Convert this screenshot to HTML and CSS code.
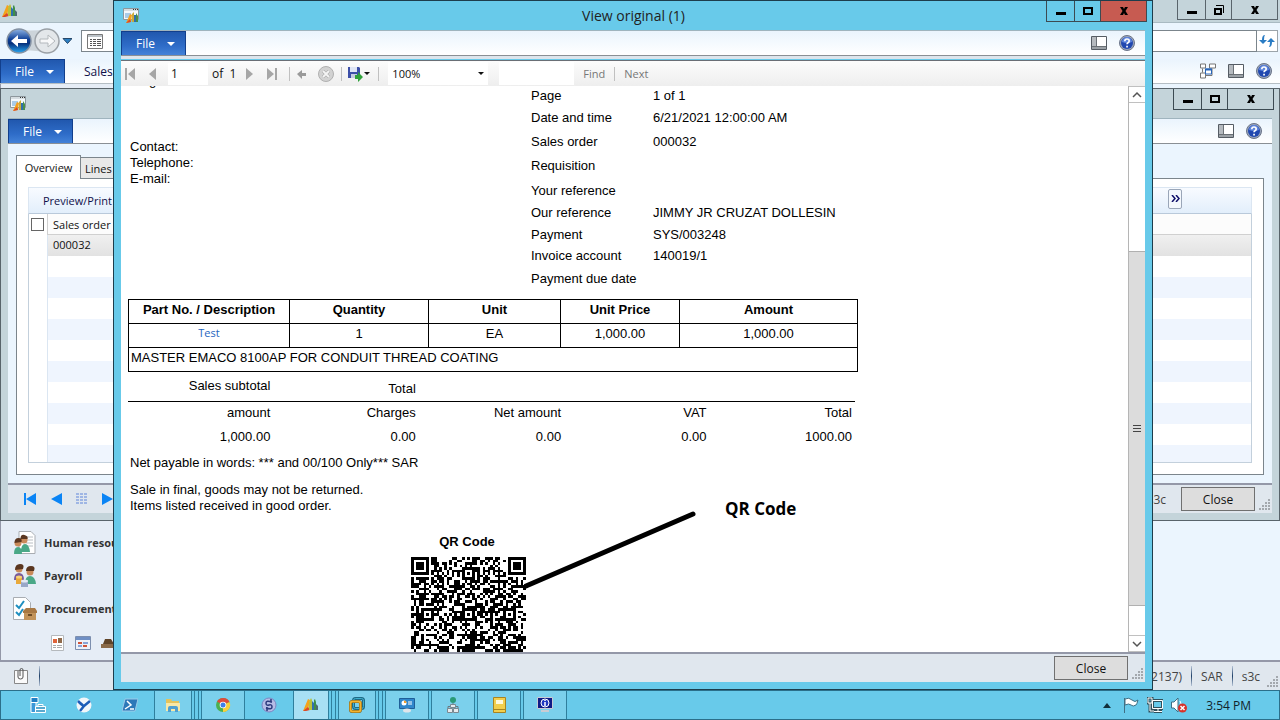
FILE: index.html
```html
<!DOCTYPE html>
<html lang="en">

<head>
    <meta charset="utf-8">
    <title>View original (1)</title>
    <link rel="stylesheet" href="styles.css">
</head>

<body>
    <svg class="symbols" aria-hidden="true">
        <symbol id="ax" viewBox="0 0 16 16">
            <path d="M0 14 5 2l2 1-2 10z" fill="#f4a31c" />
            <path d="M0 14l5-4 2 3-4 1z" fill="#d9482b" />
            <path d="M6 13V5l2-4 1 2v10z" fill="#b9c13a" />
            <path d="M9 13V4l2 2v7z" fill="#2f6fb0" />
            <path d="M11 13V3l1-1 1 3v8z" fill="#3f8f4a" />
            <path d="M13 13V7l2 2v4z" fill="#4c6b74" />
        </symbol>
        <symbol id="form" viewBox="0 0 16 16">
            <path d="M.5.5h15v11H.5z" fill="#f4f8fb" stroke="#8d979d" />
            <path d="M1 1h14v2H1z" fill="#d6dde1" />
            <path d="M10 1.5h1m1 0h1m1 0h1" stroke="#333" />
            <path d="M2 5h6v5H2z" fill="#a9cbe8" />
            <path d="M3 15 7 6l2 1-1 7z" fill="#f2a01e" />
            <path d="M3 15l4-4 1 3z" fill="#d9482b" />
            <path d="M9 14V6l2-2v10z" fill="#c9a93a" />
            <path d="M11 14V7h2v7z" fill="#2f6fb0" />
            <path d="M13 14V5l2 3v6z" fill="#4a8f4a" />
        </symbol>
        <symbol id="pane" viewBox="0 0 16 14">
            <path d="M.5.5h15v13H.5z" fill="#fff" stroke="#555c64" />
            <path d="M1 1h4v9H1z" fill="#b5babf" />
            <path d="M5.500 1v9M1 10.500h14" stroke="#6a7076" />
            <path d="M1 11h14v2H1z" fill="#9ba1a6" />
        </symbol>
        <symbol id="help" viewBox="0 0 16 16">
            <circle cx="8" cy="8" r="7.500" fill="#9aa6bd" stroke="#6b7488" />
            <circle cx="8" cy="8" r="6" fill="#2148b0" />
            <path d="M3 7a5 5 0 0 1 10 0q-5 2-10 0z" fill="#5f86dd" />
            <path d="M5.800 6.200q0-2.200 2.200-2.200t2.200 2q0 1.200-1.200 1.800-1 .6-1 1.500" fill="none" stroke="#fff" stroke-width="1.600" />
            <path d="M7.200 10.800h1.700v1.700H7.200z" fill="#fff" />
        </symbol>
        <symbol id="min" viewBox="0 0 12 10"><path d="M1 6h10v3H1z" /></symbol>
        <symbol id="max" viewBox="0 0 12 10"><path d="M2 2h8v6H2z" fill="none" stroke="#000" stroke-width="2" /></symbol>
        <symbol id="restore" viewBox="0 0 12 10"><path d="M2 4h6v5H2z" fill="none" stroke="#000" stroke-width="2" /><path d="M3 .5h7.500V8" fill="none" stroke="#000" /></symbol>
        <symbol id="close" viewBox="0 0 12 10"><path d="M2 1h3l1 2 1-2h3L7.500 5 10 9H7L6 7 5 9H2l2.500-4z" /></symbol>
        <symbol id="grip" viewBox="0 0 12 12">
            <path d="M9 1h2M6 4h5M3 7h8M0 10h11" stroke="#a3a8ad" stroke-width="2" stroke-dasharray="2 1" />
        </symbol>
    </svg>

    <main class="desktop">
        <!-- main workspace -->
        <section class="window workspace">
            <header class="titlebar">
                <svg class="icon"><use href="#ax" /></svg>
                <div class="caption-buttons">
                    <button class="cap" aria-label="Minimize"><svg><use href="#min" /></svg></button>
                    <button class="cap cap-mid" aria-label="Restore"><svg><use href="#restore" /></svg></button>
                    <button class="cap cap-close" aria-label="Close"><svg><use href="#close" /></svg></button>
                </div>
            </header>
            <div class="navbar">
                <svg class="nav-arrows" viewBox="0 0 72 28">
                    <defs>
                        <linearGradient id="orb" x2="0" y2="1">
                            <stop offset="0" stop-color="#8fb4e4" />
                            <stop offset=".45" stop-color="#0b3c94" />
                            <stop offset=".6" stop-color="#06307c" />
                            <stop offset="1" stop-color="#27a8f2" />
                        </linearGradient>
                    </defs>
                    <path d="M14 2q16 3 34 0v24q-18-5-34 0z" fill="#ccd4da" />
                    <circle cx="19" cy="14" r="12" fill="url(#orb)" stroke="#8592a3" stroke-width="1.500" />
                    <path d="M11 14l7-6v4h9v4h-9v4z" fill="#fff" />
                    <circle cx="47" cy="14" r="12" fill="#e3e7ea" stroke="#9aa0a6" stroke-width="1.500" />
                    <path d="M55 14l-7-6v4h-8v4h8v4z" fill="#f7f8f9" stroke="#b3b8bc" />
                    <path d="M63 11.500h9l-4.500 5z" fill="#2b7fc4" stroke="#27496b" />
                </svg>
                <div class="address">
                    <svg class="list-icon" viewBox="0 0 16 15">
                        <path d="M.5.5h15v14H.5z" fill="#fff" stroke="#777" />
                        <path d="M1 1h14v2H1z" fill="#bcc3c8" />
                        <path d="M3 5.500h2m1 0h3m1 0h4M3 7.500h2m1 0h3m1 0h4M3 9.500h2m1 0h3m1 0h4M3 11.500h2m1 0h3m1 0h4" stroke="#555" />
                    </svg>
                </div>
                <button class="refresh" aria-label="Refresh">
                    <svg viewBox="0 0 16 14">
                        <path d="M6 1q-3 0-3 5H0l4 4 4-4H5q0-4 1-5z" fill="#2a7cc4" />
                        <path d="M10 13q3 0 3-5h3l-4-4-4 4h3q0 4-1 5z" fill="#2a7cc4" />
                    </svg>
                </button>
            </div>
            <div class="ribbon">
                <button class="file">File<i class="caret"></i></button>
                <a class="ribbon-link" href="#">Sales</a>
                <div class="ribbon-icons">
                    <svg class="icon" viewBox="0 0 16 15">
                        <path d="M.5.500h5v4h-5zM9.500.500h6v4h-6zM.5 9.500h5v5h-5z" fill="#fff" stroke="#777" />
                        <path d="M2.500 5v4M12 5v7H6" fill="none" stroke="#777" />
                        <path d="M5.500 5.500h6v5h-6z" fill="#fff" stroke="#2a66b8" />
                        <path d="M5 5h7v2H5z" fill="#2a66b8" />
                    </svg>
                    <svg class="icon"><use href="#pane" /></svg>
                    <svg class="icon"><use href="#help" /></svg>
                </div>
            </div>
            <div class="workspace-body">
                <nav class="modules">
                    <a class="module" href="#">
                        <svg viewBox="0 0 24 24">
                            <path d="M6 .5h12l4 4v18H6z" fill="#fff" stroke="#a9adb2" />
                            <path d="M13 6h7m-7 3h7m-7 3h7m-7 3h7" stroke="#b9bec3" />
                            <path d="M1 23q0-7 4-7t4 7zM8 21q0-8 4-8t5 8z" fill="#4aa887" />
                            <circle cx="5" cy="12" r="3.500" fill="#c98a5a" /><circle cx="11" cy="9" r="3.500" fill="#c98a5a" />
                            <path d="M1.500 12q0-5 4-5t3 4zM7.500 8q0-5 4-4t3 4z" fill="#5a3620" />
                        </svg>
                        Human resources
                    </a>
                    <a class="module" href="#">
                        <svg viewBox="0 0 24 24">
                            <path d="M1 16q0-7 5-7t5 7z" fill="#7a5c9a" /><path d="M12 20q0-8 5-8t6 8z" fill="#4aa887" />
                            <circle cx="6" cy="5" r="3.500" fill="#c98a5a" /><circle cx="17" cy="8" r="3.500" fill="#c98a5a" />
                            <path d="M2 6q0-6 5-6t3 5zM13 7q0-5 5-5t3 5z" fill="#5a3620" />
                            <path d="M3 13h6v7H3z" fill="#e9a93a" /><path d="M8 17h7v6H8z" fill="#9aa8c8" />
                            <ellipse cx="6" cy="13" rx="3" ry="1.500" fill="#f7d27a" /><ellipse cx="11.500" cy="17" rx="3.500" ry="1.500" fill="#e4e9f3" />
                        </svg>
                        Payroll
                    </a>
                    <a class="module" href="#">
                        <svg viewBox="0 0 24 24">
                            <path d="M.5.500h12l5 5v17H.5z" fill="#fff" stroke="#a9adb2" />
                            <path d="M3 8l3 3 5-7M3 15l3 3 4-6" fill="none" stroke="#1f8fc0" stroke-width="2" />
                            <path d="M11 15h12v8H11z" fill="#c2935a" /><path d="M10 14l3-3h9l2 3v2H10z" fill="#a87843" />
                            <path d="M15 17h4v2h-4z" fill="#6d4b25" />
                        </svg>
                        Procurement
                    </a>
                    <div class="module-shortcuts">
                        <svg viewBox="0 0 16 16"><path d="M1.500.500h12v15h-12z" fill="#fff" stroke="#b5b9bd" /><path d="M3 4h4v4H3z" fill="#e0643a" /><path d="M8 3h4v5H8z" fill="#8f6a4a" /><path d="M3 10.500h3m1 0h5M3 12.500h3m1 0h5" stroke="#aaa" /></svg>
                        <svg viewBox="0 0 16 16"><path d="M.5 1.500h15v13H.5z" fill="#eef2fa" stroke="#7d8fae" /><path d="M1 2h14v3H1z" fill="#6f8fc4" /><path d="M3 7h4v2H3zM8 10h4v2H8z" fill="#d0543a" /><path d="M8 7h5v2H8zM3 10h4v2H3z" fill="#8aa4d6" /></svg>
                        <svg viewBox="0 0 16 16"><path d="M1 9h14v4H1z" fill="#8a6a48" /><path d="M5 4h6l3 5H3z" fill="#5f4428" /></svg>
                    </div>
                </nav>
            </div>
            <footer class="statusbar">
                <svg class="clip" viewBox="0 0 14 16"><path d="M.5 2.500h13v13H.5z" fill="#fafafa" stroke="#888" /><path d="M4 3v6q0 2 2.500 2T9 9V2q0-1.500-1.500-1.500T6 2v6" fill="none" stroke="#555" /></svg>
                <i class="divider"></i>
                <span class="status-first">(2137)</span>
                <i class="divider"></i>
                <span>SAR</span>
                <i class="divider"></i>
                <span>s3c</span>
                <svg class="grip"><use href="#grip" /></svg>
            </footer>
        </section>

        <!-- invoice journal -->
        <section class="window journal">
            <header class="titlebar">
                <svg class="icon"><use href="#form" /></svg>
                <div class="caption-buttons">
                    <button class="cap" aria-label="Minimize"><svg><use href="#min" /></svg></button>
                    <button class="cap cap-mid" aria-label="Maximize"><svg><use href="#max" /></svg></button>
                    <button class="cap cap-close" aria-label="Close"><svg><use href="#close" /></svg></button>
                </div>
            </header>
            <div class="ribbon">
                <button class="file">File<i class="caret"></i></button>
                <div class="ribbon-icons">
                    <svg class="icon"><use href="#pane" /></svg>
                    <svg class="icon"><use href="#help" /></svg>
                </div>
            </div>
            <div class="journal-body">
                <div class="tabs">
                    <button class="tab tab-active">Overview</button>
                    <button class="tab">Lines</button>
                </div>
                <div class="tab-panel">
                    <div class="actions">
                        <a href="#">Preview/Print</a>
                        <button class="more" aria-label="More">
                            <svg viewBox="0 0 9 7"><path d="M1 0l3 3.500L1 7m4-7l3 3.500L5 7" fill="none" stroke="#10106a" stroke-width="1.500" /></svg>
                        </button>
                    </div>
                    <div class="grid-wrap">
                        <table class="grid">
                            <thead>
                                <tr><th class="check"><input type="checkbox" aria-label="Select all"></th><th>Sales order</th></tr>
                            </thead>
                            <tbody>
                                <tr class="selected"><td class="check"></td><td>000032</td></tr>
                                <tr><td class="check"></td><td></td></tr>
                                <tr><td class="check"></td><td></td></tr>
                                <tr><td class="check"></td><td></td></tr>
                                <tr><td class="check"></td><td></td></tr>
                                <tr><td class="check"></td><td></td></tr>
                                <tr><td class="check"></td><td></td></tr>
                                <tr><td class="check"></td><td></td></tr>
                                <tr><td class="check"></td><td></td></tr>
                                <tr><td class="check"></td><td></td></tr>
                                <tr><td class="check"></td><td></td></tr>
                            </tbody>
                        </table>
                    </div>
                </div>
            </div>
            <footer class="statusbar">
                <svg class="record-nav" viewBox="0 0 96 12">
                    <g fill="#0a84f5">
                        <path d="M0 0h2v12H0zM12 0v12L2 6zM38 0v12L27 6zM78 0v12l11-6z" />
                    </g>
                    <path d="M52 1h12M52 4h12M52 7h12M52 10h12" stroke="#9fb6e4" stroke-width="2" stroke-dasharray="3 1" />
                </svg>
                <span class="status-first">s3c</span>
                <button class="close-button">Close</button>
                <svg class="grip"><use href="#grip" /></svg>
            </footer>
        </section>

        <!-- report viewer -->
        <section class="window viewer">
            <header class="titlebar">
                <svg class="icon"><use href="#form" /></svg>
                <h1>View original (1)</h1>
                <div class="caption-buttons">
                    <button class="cap" aria-label="Minimize"><svg><use href="#min" /></svg></button>
                    <button class="cap cap-mid" aria-label="Maximize"><svg><use href="#max" /></svg></button>
                    <button class="cap cap-close" aria-label="Close"><svg><use href="#close" /></svg></button>
                </div>
            </header>
            <div class="ribbon">
                <button class="file">File<i class="caret"></i></button>
                <div class="ribbon-icons">
                    <svg class="icon"><use href="#pane" /></svg>
                    <svg class="icon"><use href="#help" /></svg>
                </div>
            </div>
            <div class="toolbar">
                <div class="pager">
                    <button aria-label="First page"><svg viewBox="0 0 12 12"><path d="M1 0h2v12H1zM11 0v12L4 6z" fill="#a6a6a6" /></svg></button>
                    <button aria-label="Previous page"><svg viewBox="0 0 12 12"><path d="M9 0v12L2 6z" fill="#a6a6a6" /></svg></button>
                    <input type="text" value="1" aria-label="Page">
                    <span>of&nbsp; 1</span>
                    <button aria-label="Next page"><svg viewBox="0 0 12 12"><path d="M3 0v12l7-6z" fill="#a6a6a6" /></svg></button>
                    <button aria-label="Last page"><svg viewBox="0 0 12 12"><path d="M1 0v12l7-6zM9 0h2v12H9z" fill="#a6a6a6" /></svg></button>
                </div>
                <i class="sep"></i>
                <button class="tool" aria-label="Back"><svg viewBox="0 0 16 16"><path d="M3 8l5-4v3h4v3H8v3z" fill="#9a9a9a" /></svg></button>
                <button class="tool" aria-label="Stop"><svg viewBox="0 0 16 16"><circle cx="8" cy="8" r="7.500" fill="#d2d2d2" stroke="#b0b0b0" /><path d="M5 5l6 6m0-6l-6 6" stroke="#a0a0a0" stroke-width="3" /><path d="M5 5l6 6m0-6l-6 6" stroke="#f4f4f4" stroke-width="2" /></svg></button>
                <i class="sep"></i>
                <button class="tool export" aria-label="Export">
                    <svg viewBox="0 0 16 16"><path d="M1 1h11l1 1v10H1z" fill="#3c4fa8" /><path d="M3 1h7v5H3z" fill="#dfe6f6" /><path d="M4 8h6v4H4z" fill="#c5cbe0" /><path d="M8 9h3V6l5 5-5 5v-3H8z" fill="#2fa13a" /></svg>
                    <i class="caret"></i>
                </button>
                <i class="sep"></i>
                <label class="zoom">
                    <select aria-label="Zoom"><option>100%</option></select>
                    <i class="caret"></i>
                </label>
                <input class="find" type="text" aria-label="Find text">
                <button class="text-button">Find</button>
                <i class="sep"></i>
                <button class="text-button">Next</button>
            </div>
            <div class="report-area">
                <article class="report">
                    <div class="scrolled-line"><span>g</span></div>
                    <div class="report-head">
                        <div class="contact">
                            <div>Contact:</div>
                            <div>Telephone:</div>
                            <div>E-mail:</div>
                        </div>
                        <dl class="details">
                            <dt>Page</dt><dd>1 of 1</dd>
                            <dt>Date and time</dt><dd>6/21/2021 12:00:00 AM</dd>
                            <dt>Sales order</dt><dd>000032</dd>
                            <dt>Requisition</dt><dd></dd>
                            <dt>Your reference</dt><dd></dd>
                            <dt>Our reference</dt><dd>JIMMY JR CRUZAT DOLLESIN</dd>
                            <dt>Payment</dt><dd>SYS/003248</dd>
                            <dt>Invoice account</dt><dd>140019/1</dd>
                            <dt>Payment due date</dt><dd></dd>
                        </dl>
                    </div>
                    <table class="lines">
                        <colgroup><col class="c-part"><col class="c-qty"><col class="c-unit"><col class="c-price"><col></colgroup>
                        <thead>
                            <tr><th>Part No. / Description</th><th>Quantity</th><th>Unit</th><th>Unit Price</th><th>Amount</th></tr>
                        </thead>
                        <tbody>
                            <tr><td class="part"><a href="#">Test</a></td><td>1</td><td>EA</td><td>1,000.00</td><td>1,000.00</td></tr>
                            <tr><td class="description" colspan="5">MASTER EMACO 8100AP FOR CONDUIT THREAD COATING</td></tr>
                        </tbody>
                    </table>
                    <table class="totals">
                        <thead>
                            <tr class="totals-top"><th>Sales subtotal</th><th class="low">Total</th><th></th><th></th><th></th></tr>
                            <tr><th>amount</th><th>Charges</th><th>Net amount</th><th>VAT</th><th>Total</th></tr>
                        </thead>
                        <tbody>
                            <tr><td>1,000.00</td><td>0.00</td><td>0.00</td><td>0.00</td><td>1000.00</td></tr>
                        </tbody>
                    </table>
                    <p class="words">Net payable in words: *** and 00/100 Only*** SAR</p>
                    <p class="terms">Sale in final, goods may not be returned.<br>Items listed received in good order.</p>
                    <figure class="qr">
                        <figcaption>QR Code</figcaption>
                        <svg viewBox="0 0 45 45" shape-rendering="crispEdges"><path id="qrPath" d="" /></svg>
                    </figure>
                    <div class="callout">
                        <svg viewBox="0 0 172 78"><path d="M2 75 169 3" stroke="#000" stroke-width="5" stroke-linecap="round" /></svg>
                        <strong>QR Code</strong>
                    </div>
                </article>
                <div class="scrollbar">
                    <button aria-label="Scroll up"><svg viewBox="0 0 10 8"><path d="M1 6l4-4 4 4" fill="none" stroke="#555" stroke-width="1.500" /></svg></button>
                    <div class="track">
                        <div class="thumb"><i></i></div>
                    </div>
                    <button aria-label="Scroll down"><svg viewBox="0 0 10 8"><path d="M1 2l4 4 4-4" fill="none" stroke="#555" stroke-width="1.500" /></svg></button>
                </div>
            </div>
            <footer class="statusbar">
                <button class="close-button">Close</button>
                <svg class="grip"><use href="#grip" /></svg>
            </footer>
        </section>
    </main>

    <footer class="taskbar">
        <div class="pinned">
            <svg viewBox="0 0 16 16"><path d="M1 .5h7v5H1z" fill="#1f7fc4" stroke="#fff" /><path d="M1 5.500h5v10H1z" fill="#3a98d8" stroke="#fff" /><path d="M5.500 9.500h10v6h-10zM8 9V7.500h5V9M5 12.500h11" fill="#5aa9cf" stroke="#fff" /></svg>
            <svg viewBox="0 0 16 16"><circle cx="8" cy="8" r="7.500" fill="#f2f6fa" /><path d="M2 4q4 4 6 5l6-5M8 9l-4 5" fill="none" stroke="#1c5cb8" stroke-width="2.500" /></svg>
            <svg viewBox="0 0 16 16"><path d="M3 2h13l-3 12H0z" fill="#2d78b8" stroke="#9ccbe8" /><path d="M5 4l4 4-6 4M8 12h4" fill="none" stroke="#fff" stroke-width="1.500" /></svg>
        </div>
        <button class="task task-explorer" aria-label="Explorer"><svg viewBox="0 0 16 16"><path d="M1 2h5l1 2h7v10H1z" fill="#e3c35c" /><path d="M1 6h14v8H1z" fill="#f8e8a6" /><path d="M3 15v-4q0-2 2-2h6q2 0 2 2v4h-3v-3H6v3z" fill="#4f9fd0" /></svg></button>
        <i class="stack"></i>
        <button class="task" aria-label="Chrome"><svg viewBox="0 0 16 16"><circle cx="8" cy="8" r="7" fill="#4caf50" /><path d="M8 8 2 4.500A7 7 0 0 1 14.500 5z" fill="#de4b3c" /><path d="M8 8l6.500-3A7 7 0 0 1 8 15z" fill="#f8cf3d" /><circle cx="8" cy="8" r="3.300" fill="#fff" /><circle cx="8" cy="8" r="2.500" fill="#3f7fe8" /></svg></button>
        <button class="task task-plain" aria-label="Sync"><svg viewBox="0 0 16 16"><circle cx="8" cy="8" r="7" fill="#b5bce6" stroke="#7d86c4" /><path d="M11 5Q5 3 5 6t3 2 3 2-6 1M10 2v4M6 10v4" fill="none" stroke="#2c3a7c" stroke-width="1.500" /></svg></button>
        <button class="task task-active" aria-label="Dynamics AX"><svg><use href="#ax" /></svg></button>
        <i class="stack"></i>
        <button class="task task-small" aria-label="Virtual machines"><svg viewBox="0 0 16 16"><rect x="4.500" y="1.500" width="10" height="10" rx="2" fill="none" stroke="#1f6a86" stroke-width="3" /><rect x="4.500" y="1.500" width="10" height="10" rx="2" fill="none" stroke="#3fb0cc" /><rect x="1.500" y="4.500" width="10" height="10" rx="2" fill="none" stroke="#7a5a10" stroke-width="3" /><rect x="1.500" y="4.500" width="10" height="10" rx="2" fill="none" stroke="#f2b431" stroke-width="2" /></svg></button>
        <i class="stack"></i>
        <button class="task" aria-label="System settings"><svg viewBox="0 0 16 16"><path d="M.5 1.500h15v10H.5z" fill="#2f86cc" stroke="#1f5f98" /><circle cx="5" cy="6" r="2.500" fill="#fff" /><path d="M5 6V3.500A2.500 2.500 0 0 1 7.500 6z" fill="#f0a030" /><path d="M9 5h4M9 7h4" stroke="#fff" /><ellipse cx="8" cy="13.500" rx="4" ry="2" fill="#dfe5ea" /></svg></button>
        <button class="task" aria-label="Network services"><svg viewBox="0 0 16 16"><circle cx="8" cy="3" r="3" fill="#2a9a78" /><path d="M8 6v4M3 12V9.500h10V12" fill="none" stroke="#6a7880" /><path d="M5.500 7.500h5v3h-5zM2.500 11.500h5v4h-5zM8.500 11.500h5v4h-5z" fill="#e6ebef" stroke="#7a8890" /></svg></button>
        <button class="task" aria-label="Notes"><svg viewBox="0 0 16 16"><path d="M2.500.500h12v15h-12z" fill="#f2cf4d" stroke="#a88420" /><path d="M5 3h7v4H5z" fill="#fff9dc" /><path d="M3 12.500h11" stroke="#a88420" /></svg></button>
        <button class="task" aria-label="System information"><svg viewBox="0 0 16 16"><path d="M.5.500h15v11H.5z" fill="#101c86" stroke="#c8ccd4" /><circle cx="8" cy="6" r="4" fill="#2038c0" stroke="#fff" /><path d="M8 3v1m0 1v4" stroke="#fff" stroke-width="1.500" /><path d="M4 13h8v2H4z" fill="#c8ccd4" /></svg></button>
        <div class="tray">
            <svg class="tray-up" viewBox="0 0 8 5"><path d="M0 5 4 0l4 5z" fill="#12303c" /></svg>
            <svg viewBox="0 0 16 16"><path d="M1.500 1v15M2 2q4-2 7 1t6 0q-1 4-2 5-3 2-5 0T2 8z" fill="#fff" stroke="#3f6f84" /></svg>
            <svg viewBox="0 0 16 16"><path d="M5.500 3.500h10v8h-10z" fill="#68caea" stroke="#31505c" stroke-width="3" /><path d="M11 12v3M7 14.500h8M1 1h4v5H1zM3 6v8h4" fill="none" stroke="#31505c" stroke-width="3" /><path d="M5.500 3.500h10v8h-10zM7 14.500h8M11 12v2M1 1h4v5H1zM3 6v8h4" fill="none" stroke="#fff" /></svg>
            <svg viewBox="0 0 16 16"><path d="M.5 5H3l4-4v14l-4-4H.5z" fill="#fff" stroke="#3f6f84" /><path d="M9 4q3 4 0 8" fill="none" stroke="#fff" /><circle cx="11.500" cy="11" r="4.500" fill="#d8322a" /><path d="M9.500 9l4 4m0-4l-4 4" stroke="#fff" stroke-width="1.500" /></svg>
            <time>3:54 PM</time>
        </div>
    </footer>

    <script src="script.js"></script>
</body>

</html>
```
FILE: styles.css
```css
* {
    box-sizing: border-box;
}

body {
    margin: 0;
    height: 100vh;
    display: flex;
    flex-direction: column;
    overflow: hidden;
    font-family: "Open Sans", "Noto Sans", sans-serif;
    font-size: 12px;
    color: #222;
}

button,
input,
select {
    margin: 0;
    padding: 0;
    border: 0;
    border-radius: 0;
    background: none;
    font: inherit;
    color: inherit;
}

a {
    color: inherit;
    text-decoration: none;
}

svg {
    display: block;
    flex: none;
}

.symbols {
    display: none;
}

.icon {
    width: 16px;
    height: 16px;
}

.caret {
    border: 4px solid transparent;
    border-top-color: currentColor;
    border-bottom: 0;
}

/* windows */

.desktop {
    position: relative;
    flex: 1;
    min-height: 0;
}

.window {
    position: absolute;
    display: flex;
    flex-direction: column;
    overflow: hidden;
}

.workspace {
    inset: 0;
    background: #ebf5fe;
}

.journal {
    top: 88px;
    left: 0;
    right: 0;
    bottom: 169px;
    padding: 0 7px 7px;
    border: 1px solid #59646b;
    background: #c4d4da;
}

.viewer {
    top: 0;
    left: 113px;
    right: 127px;
    bottom: 0;
    padding: 0 7px 7px;
    border: 1px solid #1d3d4c;
    background: #68caea;
}

.titlebar {
    flex: none;
    display: flex;
    align-items: center;
    height: 29px;
    padding-left: 2px;
}

.workspace .titlebar {
    height: 23px;
    background: #c4d4da;
    border-bottom: 1px solid #a9bac2;
}

.titlebar h1 {
    flex: 1;
    margin: 0;
    padding-left: 82px;
    text-align: center;
    font-size: 14px;
    font-weight: 400;
}

.caption-buttons {
    display: flex;
    align-self: flex-start;
    margin-left: auto;
}

.viewer .caption-buttons,
.journal .caption-buttons {
    margin-right: -2px;
}

.cap {
    display: flex;
    align-items: center;
    justify-content: center;
    width: 29px;
    height: 21px;
    border: 1px solid #3c4a52;
    border-top: 0;
}

.workspace .cap {
    height: 20px;
    border-color: #59646b;
}

.cap + .cap {
    margin-left: -1px;
}

.cap svg {
    width: 12px;
    height: 10px;
}

.cap-mid {
    width: 27px;
}

.cap-close {
    width: 47px;
}

.viewer .cap-close {
    background: #c75b51;
}

.workspace .caption-buttons {
    margin-right: 2px;
}

.navbar {
    flex: none;
    display: flex;
    align-items: center;
    height: 36px;
    padding: 0 2px 0 0;
}

.nav-arrows {
    width: 72px;
    height: 28px;
}

.address {
    flex: 1;
    display: flex;
    align-items: center;
    height: 22px;
    margin-left: 9px;
    padding-left: 5px;
    border: 1px solid #7b858c;
    background: #fff;
}

.list-icon {
    width: 16px;
    height: 15px;
}

.refresh {
    width: 21px;
    height: 22px;
    border: 1px solid #9ba4aa;
    border-left: 0;
    background: #fff;
}

.refresh svg {
    width: 16px;
    height: 14px;
    margin: 0 auto;
}

.ribbon {
    flex: none;
    display: flex;
    align-items: center;
    height: 26px;
    border-top: 1px solid #9fb4be;
    border-bottom: 1px solid #8a8f94;
    background: linear-gradient(#eaf4fd, #fff);
}

.workspace .ribbon {
    height: 25px;
    border-top: 0;
    border-bottom-color: #b5bec4;
}

.file {
    display: flex;
    align-items: center;
    gap: 12px;
    align-self: stretch;
    width: 65px;
    padding-left: 14px;
    border: 1px solid #123f8c;
    border-bottom: 0;
    background: linear-gradient(#2158ae, #2e6cc8 60%, #4382d8);
    color: #fff;
}

.ribbon-link {
    margin-left: 19px;
    color: #10104a;
}

.ribbon-icons {
    display: flex;
    gap: 12px;
    margin-left: auto;
    padding-right: 10px;
}

.workspace .ribbon-icons {
    padding-right: 8px;
}

.statusbar {
    flex: none;
    display: flex;
    align-items: center;
    height: 30px;
    border-top: 2px solid #9498a8;
    background: #e0e7ee;
    color: #444;
}

.status-first {
    margin-left: auto;
}

.divider {
    width: 1px;
    height: 20px;
    margin: 0 9px;
    background: linear-gradient(#b8c6d8, #1f4068, #b8c6d8);
}

.grip {
    align-self: flex-end;
    width: 12px;
    height: 12px;
    margin: 0 1px 2px 4px;
}

.workspace .grip {
    margin-left: 7px;
}

.close-button {
    width: 74px;
    height: 24px;
    border: 1px solid #707070;
    background: #dddddd;
    color: #111;
}

.viewer .close-button {
    margin-left: auto;
}

/* workspace */

.workspace-body {
    flex: 1;
    display: flex;
    align-items: stretch;
}

.modules {
    display: flex;
    flex-direction: column;
    justify-content: flex-end;
    width: 200px;
    padding-bottom: 3px;
    border-left: 1px solid #9498a8;
    background: #e6edf6;
}

.module {
    display: flex;
    align-items: center;
    gap: 7px;
    height: 33px;
    padding-left: 12px;
    font-weight: 700;
    font-size: 11px;
    white-space: nowrap;
    color: #333;
}

.module svg {
    width: 24px;
    height: 24px;
}

.module-shortcuts {
    display: flex;
    align-items: center;
    gap: 9px;
    height: 28px;
    margin-top: 4px;
    padding-left: 49px;
}

.module-shortcuts svg {
    width: 16px;
    height: 16px;
}

.clip {
    width: 14px;
    height: 16px;
    margin-left: 14px;
}

.clip + .divider {
    margin-left: 11px;
}

/* invoice journal */

.journal-body {
    flex: 1;
    display: flex;
    flex-direction: column;
    min-height: 0;
    padding: 11px 8px 8px;
    background: #ebf5fe;
    font-size: 11px;
    color: #111;
}

.tabs {
    display: flex;
    align-items: flex-end;
}

.tab {
    height: 21px;
    padding: 0 4px;
    border: 1px solid #7b858c;
    border-left: 0;
    border-bottom: 0;
    background: #e8e8e8;
}

.tab-active {
    width: 65px;
    height: 24px;
    margin-bottom: -1px;
    border-left: 1px solid #7b858c;
    background: #fff;
    z-index: 1;
}

.tab-panel {
    flex: 1;
    display: flex;
    flex-direction: column;
    min-height: 0;
    padding: 8px 11px 11px;
    border: 1px solid #7b858c;
    background: #fff;
}

.actions {
    flex: none;
    display: flex;
    align-items: center;
    height: 27px;
    padding: 0 69px 0 14px;
    border: 1px solid #dbe6f2;
    border-bottom-color: #b9c9da;
    background: linear-gradient(#f8fbff, #e2eefb);
    color: #10104a;
}

.more {
    width: 14px;
    height: 20px;
    margin-left: auto;
    margin-bottom: 4px;
    border: 1px solid #9aa6b8;
    border-radius: 2px;
    background: #f4f8fd;
}

.more svg {
    width: 9px;
    height: 7px;
    margin: 0 auto;
}

.grid-wrap {
    flex: 1;
    min-height: 0;
    overflow: hidden;
    border: 1px solid #c3d0dc;
    border-top: 0;
}

.grid {
    width: 100%;
    border-collapse: separate;
    border-spacing: 0;
    table-layout: fixed;
}

.grid th,
.grid td {
    height: 21px;
    padding: 0 0 0 5px;
    font-weight: 400;
    text-align: left;
}

.grid td {
    padding-bottom: 3px;
    border-left: 1px solid #dbe6f2;
}

.grid th {
    border-left: 1px solid #d0d0d0;
    border-bottom: 1px solid #d0d0d0;
    background: #fcfcfc;
}

.grid tbody tr:nth-child(odd) td {
    background: #eff5fe;
}

.grid tbody tr.selected:first-child td {
    background: linear-gradient(#f0f0f0, #e2e2e2);
}

.grid .check,
.grid tbody tr:nth-child(odd) td.check {
    width: 18px;
    padding: 0 0 0 2px;
    border: 0;
    background: #fff;
}

.check input {
    display: block;
    appearance: none;
    width: 13px;
    height: 13px;
    border: 1px solid #666;
    background: #fff;
}

.record-nav {
    width: 96px;
    height: 12px;
    margin-left: 16px;
}

.journal .close-button {
    margin-left: 15px;
}

/* report viewer */

.viewer .ribbon {
    box-shadow: 0 3px 0 #dde5ec;
}

.toolbar {
    flex: none;
    display: flex;
    align-items: center;
    height: 26px;
    margin-top: 4px;
    padding-left: 3px;
    border-top: 1px solid #6a6f76;
    background: linear-gradient(#fcfcfc, #eeeeee);
    color: #111;
}

.toolbar svg {
    width: 12px;
    height: 12px;
}

.toolbar .tool svg {
    width: 16px;
    height: 16px;
}

.pager {
    display: flex;
    align-items: center;
    gap: 11px;
}

.pager input {
    width: 40px;
    height: 22px;
    margin-right: -7px;
    padding-left: 3px;
    background: #fff;
}

.pager button:first-child + button {
    margin-right: -2px;
}

.pager span {
    margin-right: -4px;
}

.sep {
    width: 1px;
    height: 14px;
    margin: 0 9px;
    background: #c0c0c0;
}

.pager + .sep {
    margin: 0 4px 0 11px;
}

.tool {
    display: flex;
    align-items: center;
}

.tool + .tool {
    margin-left: 8px;
}

.tool + .sep {
    margin: 0 5px 0 7px;
}

.export {
    gap: 1px;
}

.export .caret,
.zoom .caret {
    border-width: 3px;
    border-bottom: 0;
}

.export + .sep {
    margin: 0 9px 0 8px;
}

.zoom {
    display: flex;
    align-items: center;
    width: 100px;
    height: 23px;
    background: #fff;
}

.zoom select {
    appearance: none;
    width: 90px;
    padding-left: 4px;
    font-size: 11px;
}

.find {
    width: 75px;
    height: 23px;
    margin: 0 9px 0 11px;
    background: #fff;
}

.text-button {
    font-size: 11px;
    color: #777;
}

.report-area {
    flex: 1;
    display: flex;
    min-height: 0;
    background: #fff;
}

.report {
    position: relative;
    flex: 1;
    overflow: hidden;
    padding-left: 7px;
    font-family: "Liberation Sans", Arial, sans-serif;
    font-size: 13px;
    line-height: 16px;
    color: #000;
}

.scrolled-line {
    display: flex;
    align-items: flex-end;
    height: 3px;
    padding-left: 21px;
    overflow: hidden;
}

.report-head {
    display: flex;
    width: 730px;
    height: 210px;
}

.contact {
    width: 403px;
    padding: 50px 0 0 2px;
}

.details {
    display: grid;
    grid-template-columns: 122px 1fr;
    grid-template-rows: 22px 24px 24px 25px 22px 22px 21px 23px;
    margin: -1px 0 0;
}

.details dd {
    margin: 0;
}

.lines {
    width: 730px;
    border-collapse: collapse;
    table-layout: fixed;
}

.lines th,
.lines td {
    height: 24px;
    padding: 0 0 3px;
    border: 1px solid #000;
    text-align: center;
}

.lines .description {
    padding-left: 2px;
    text-align: left;
}

.lines .part {
    padding-bottom: 5px;
    font-family: "Open Sans", sans-serif;
    font-size: 11px;
    color: #1f66c0;
}

.c-part {
    width: 161px;
}

.c-qty {
    width: 139px;
}

.c-unit {
    width: 132px;
}

.c-price {
    width: 119px;
}

.totals {
    width: 727px;
    border-collapse: collapse;
    table-layout: fixed;
}

.totals th,
.totals td {
    height: 24px;
    padding: 0 3px 0 0;
    font-weight: 400;
    text-align: right;
    vertical-align: middle;
}

.totals .totals-top th {
    height: 29px;
    border-bottom: 1px solid #000;
}

.totals .totals-top .low {
    padding-top: 6px;
}

.words,
.terms {
    margin: 0 0 0 2px;
}

.words {
    padding: 6px 0 11px;
}

.qr {
    width: 115px;
    margin: 20px 0 0 283px;
    text-align: center;
}

.qr figcaption {
    padding-right: 3px;
    font-weight: 700;
}

.qr svg {
    width: 115px;
    height: 115px;
    margin-top: 7px;
}

/* arrow drawn over the report */
.callout {
    position: absolute;
    left: 403px;
    top: 415px;
    display: flex;
    gap: 29px;
}

.callout svg {
    width: 172px;
    height: 78px;
    margin-top: 10px;
}

.callout strong {
    font-family: "Open Sans", sans-serif;
    font-size: 17px;
}

.scrollbar {
    display: flex;
    flex-direction: column;
    width: 17px;
    border-left: 1px solid #b5b5b5;
    background: #fff;
}

.scrollbar button {
    display: flex;
    align-items: center;
    justify-content: center;
    height: 17px;
    border: 1px solid #c0c0c0;
    border-width: 1px 0;
}

.scrollbar svg {
    width: 10px;
    height: 8px;
}

.track {
    flex: 1;
    display: flex;
    align-items: flex-start;
    padding-top: 148px;
    padding-bottom: 29px;
}

.thumb {
    display: flex;
    align-items: center;
    justify-content: center;
    align-self: stretch;
    width: 100%;
    border: 1px solid #b0b0b0;
    border-width: 1px 0;
    background: #dcdcdc;
}

.thumb i {
    width: 8px;
    height: 7px;
    background: repeating-linear-gradient(#444 0 1px, transparent 1px 3px);
}

/* taskbar */

.taskbar {
    flex: none;
    display: flex;
    height: 30px;
    border: 1px solid #2b6f8a;
    background: #68caea;
}

.taskbar svg {
    width: 16px;
    height: 16px;
}

.pinned {
    display: flex;
    align-items: center;
    gap: 30px;
    width: 153px;
    padding-left: 29px;
}

.task {
    display: flex;
    align-items: center;
    justify-content: center;
    width: 44px;
    margin-right: 2px;
    border: 1px solid #2f7f9d;
    border-width: 0 1px;
    background: #7bd0ec;
}

.task-explorer {
    width: 38px;
}

.task-plain {
    border-color: transparent;
    background: none;
}

.task-active {
    width: 36px;
    background: #a8e0f4;
}

.task-small {
    width: 38px;
}

.stack {
    width: 5px;
    margin-right: 2px;
    border: 1px solid #2f7f9d;
    border-width: 0 1px;
}

.tray {
    display: flex;
    align-items: center;
    gap: 8px;
    margin-left: auto;
    padding-right: 28px;
    color: #12242c;
}

.taskbar .tray-up {
    width: 8px;
    height: 5px;
    margin-right: 4px;
}

.tray time {
    margin-left: 11px;
}
```
FILE: script.js
```js
const size = 45;
const qrPath = document.getElementById("qrPath");

const distance = (x, y, cx, cy) => Math.max(Math.abs(x - cx), Math.abs(y - cy));

// corner square with its light margin
const finder = (x, y, cx, cy) => {
    const d = distance(x, y, cx, cy);
    return d > 4 ? null : d !== 4 && d !== 2;
}

// small alignment square
const mark = (x, y, cx, cy) => {
    const d = distance(x, y, cx, cy);
    return d > 2 ? null : d !== 1;
}

const marks = [[22, 6], [6, 22], [22, 22], [38, 22], [22, 38], [38, 38]];

let seed = 3248;
const next = () => {
    seed = (seed * 1103515 + 12345) % 2147483648;
    return seed / 2147483648;
}

const isDark = (x, y) => {
    const data = next() < 0.52;
    const fixed = [
        finder(x, y, 3, 3),
        finder(x, y, size - 4, 3),
        finder(x, y, 3, size - 4),
        ...marks.map(([cx, cy]) => mark(x, y, cx, cy))
    ].find(v => v !== null);
    if (fixed !== undefined) return fixed;
    if (x === 6 || y === 6) return (x + y) % 2 === 0;
    return data;
}

let d = "";
for (let y = 0; y < size; y++) {
    for (let x = 0; x < size; x++) {
        if (isDark(x, y)) d += `M${x} ${y}h1v1h-1z`;
    }
}
qrPath.setAttribute("d", d);
```
